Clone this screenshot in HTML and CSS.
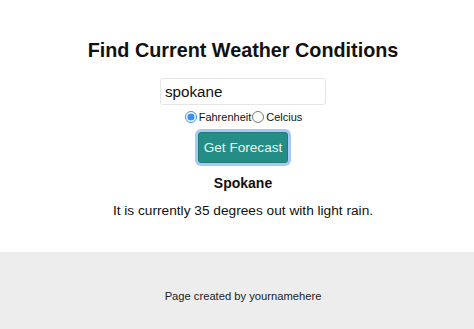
FILE: index.html
```html
<!DOCTYPE html>
<html lang="en">
<head>
    <meta charset="UTF-8">
    <meta name="viewport" content="width=device-width, initial-scale=1.0">
    <title>Weather</title>
    <link rel="stylesheet" href="styles.css">
</head>
<body>
    <main class="content">
        <h1>Find Current Weather Conditions</h1>

        <form class="search">
            <input type="text" class="city" value="spokane">
            <div class="units">
                <label><input type="radio" name="unit" checked>Fahrenheit</label>
                <label><input type="radio" name="unit">Celcius</label>
            </div>
            <button type="button" class="btn">Get Forecast</button>
        </form>

        <div class="result">
            <h2>Spokane</h2>
            <p>It is currently 35 degrees out with light rain.</p>
        </div>
    </main>

    <footer>
        <p>Page created by yournamehere</p>
    </footer>
</body>
</html>
```

FILE: styles.css
```css
*{box-sizing:border-box;margin:0;padding:0}
html,body{height:100%}
body{font-family:"Liberation Sans",Arial,sans-serif;color:#111;background:#fff;display:flex;flex-direction:column}
.content{padding:38px 0 0 12px;text-align:center;height:252px}
h1{font-size:19.8px;line-height:24px;font-weight:bold;color:#111}
.search{display:flex;flex-direction:column;align-items:center;margin-top:16px}
.city{width:166px;height:27px;border:1px solid #e6e6e6;border-radius:3px;padding:0 4px;font-family:inherit;font-size:15.2px;color:#111;background:#fff;outline:none}
.units{display:flex;align-items:center;margin-top:5px;font-size:11px;line-height:14px}
.units label{display:flex;align-items:center}
.units input{width:12px;height:12px;margin:0 2px 0 1px;accent-color:#3b8ff0}
.btn{margin-top:8px;width:90px;height:31px;background:#238d86;color:#eaf5f3;font-family:inherit;font-size:13.6px;border:1px solid #1f7c76;border-radius:3px;box-shadow:0 0 0 3px #a8c9f5;cursor:pointer}
.result{margin-top:11px}
.result h2{font-size:14px;line-height:18px;font-weight:bold}
.result p{font-size:13.7px;line-height:18px;margin-top:10px}
footer{flex:1;background:#ededed;display:flex;justify-content:center;padding:37px 0 0 12px}
footer p{font-size:11.2px;line-height:14px;color:#222}
```
